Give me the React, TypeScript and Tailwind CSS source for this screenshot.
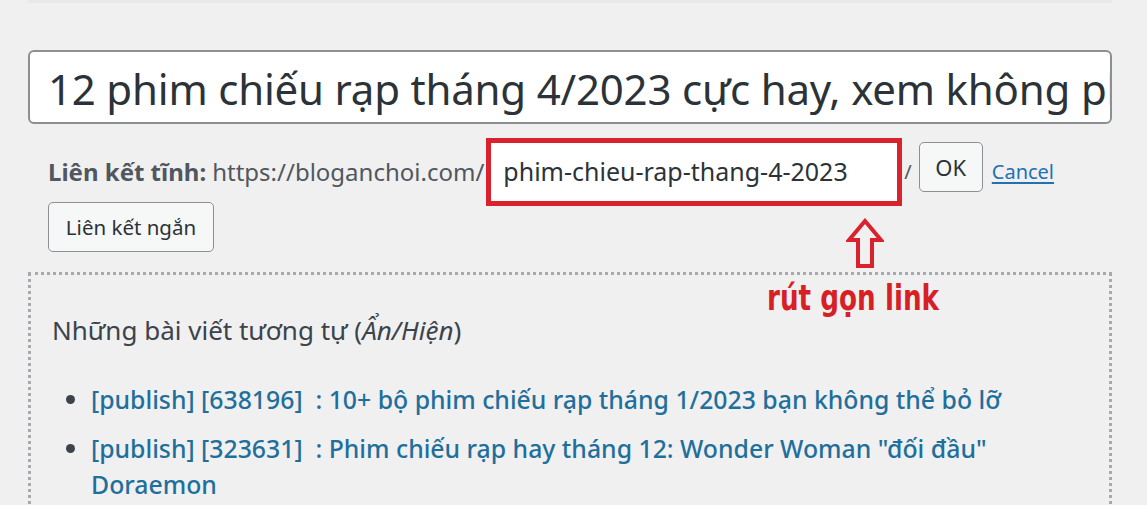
import React from "react";

const font = { fontFamily: '"Noto Sans", "Open Sans", sans-serif' };

export default function App() {
  return (
    <div className="relative w-[1147px] h-[505px] overflow-hidden bg-[#f0f0f1]" style={font}>
      <div className="ml-[28px] mr-[35px] h-[3px] bg-[#e8e8e9]" />
      <div className="pl-[28px] pr-[35px] pt-[47px]">
        <div className="h-[74px] rounded-[6px] border-2 border-[#8c8f94] bg-white flex items-center pl-[18px] pt-[3px] overflow-hidden">
          <span className="whitespace-nowrap text-[42px] text-[#2c3338] leading-none tracking-[-0.2px]">
            12 phim chiếu rạp tháng 4/2023 cực hay, xem không phải nghĩ
          </span>
        </div>

        <div className="pl-[20px] mt-[23px] flex items-center h-[50px] text-[24px] text-[#50575e]">
          <span className="font-bold whitespace-nowrap">Liên kết tĩnh:</span>
          <span className="ml-[6px] whitespace-nowrap">https://bloganchoi.com/</span>
          <div className="ml-[7px] w-[406px] h-[58px] shrink-0 bg-white outline-[5px] outline-solid outline-[#d9222d] flex items-center pl-[12px]">
            <span className="text-[25px] text-[#2c3338] whitespace-nowrap">phim-chieu-rap-thang-4-2023</span>
          </div>
          <span className="ml-[7px] text-[20px]">/</span>
          <div className="ml-[7px] -mt-[10px] w-[64px] h-[50px] shrink-0 rounded-[5px] border border-[#8c8f94] bg-[#f6f7f7] flex items-center justify-center text-[22px] text-[#2c3338]">
            OK
          </div>
          <span className="ml-[9px] text-[#2271b1] underline underline-offset-[3px] text-[20px] whitespace-nowrap">Cancel</span>
        </div>

        <div className="pl-[20px] mt-[5px]">
          <div className="w-[166px] h-[50px] rounded-[5px] border border-[#8c8f94] bg-[#f6f7f7] flex items-center justify-center text-[20.5px] text-[#2c3338] whitespace-nowrap">
            Liên kết ngắn
          </div>
        </div>

        <div className="mt-[20px] h-[300px] border-[3px] border-dotted border-[#a7aaad] pl-[21px] pt-[37px]">
          <div className="text-[26px] text-[#3c434a] leading-[36px]">
            Những bài viết tương tự (<i>Ẩn/Hiện</i>)
          </div>
          <ul className="mt-[33px] list-disc pl-[39px] text-[24.8px] font-medium leading-[36px] text-[#1f6f9c] marker:text-[#3c434a]">
            <li className="w-[940px]">[publish] [638196]&nbsp; : 10+ bộ phim chiếu rạp tháng 1/2023 bạn không thể bỏ lỡ</li>
            <li className="mt-[13px] w-[940px]">
              [publish] [323631]&nbsp; : Phim chiếu rạp hay tháng 12: Wonder Woman "đối đầu" Doraemon
            </li>
          </ul>
        </div>
      </div>

      <svg className="absolute left-[846px] top-[218px]" width="38" height="51" viewBox="0 0 38 51">
        <path d="M19 3 L35 22 L26 22 L26 48 L12 48 L12 22 L3 22 Z" fill="none" stroke="#d9222d" strokeWidth="4" strokeLinejoin="miter" />
      </svg>
      <div
        className="absolute left-[767px] top-[280px] text-[36px] font-bold text-[#d71f26] leading-none whitespace-nowrap origin-left scale-x-[0.81]"
        style={{ fontFamily: '"Liberation Sans Narrow", "DejaVu Sans Condensed", sans-serif', fontStretch: "condensed" }}
      >
        rút gọn link
      </div>
    </div>
  );
}
